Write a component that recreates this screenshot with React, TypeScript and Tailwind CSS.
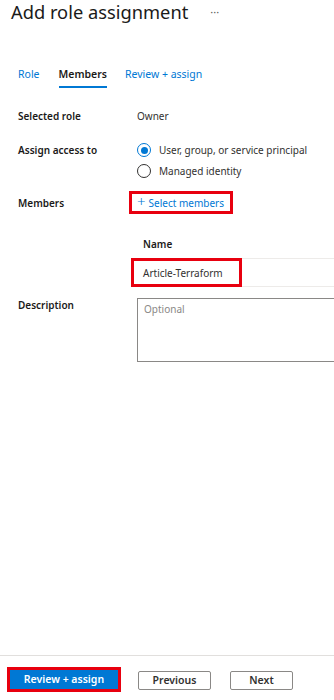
import React from "react";

const font = { fontFamily: '"Noto Sans", "Open Sans", sans-serif' };

export default function App() {
  return (
    <div
      className="w-[334px] h-[700px] bg-white flex flex-col overflow-hidden text-[#323130]"
      style={font}
    >
      <div className="flex-1 overflow-hidden">
        {/* Title */}
        <div className="flex items-center h-[24px] pl-[11px]">
          <h1 className="text-[18.3px] leading-[24px] text-[#1b1a19] whitespace-nowrap">
            Add role assignment
          </h1>
          <span className="ml-[22px] text-[11px] text-[#605e5c] leading-none -mt-[2px]">
            ···
          </span>
        </div>

        {/* Tabs */}
        <div className="mt-[38px] flex pl-[18px] text-[10.5px] leading-[20px]">
          <div className="mr-[19px] pt-[2px] pb-[2px] border-b-2 border-transparent text-[#0078d4]">
            Role
          </div>
          <div className="mr-[18px] pt-[2px] pb-[2px] border-b-2 border-[#0078d4] text-[#1b1a19] font-semibold">
            Members
          </div>
          <div className="pt-[2px] pb-[2px] border-b-2 border-transparent text-[#0078d4]">
            Review + assign
          </div>
        </div>

        {/* Form */}
        <div className="pl-[18px] text-[10px] leading-[20px]">
          <div className="mt-[18px] flex">
            <div className="w-[119px] shrink-0 font-semibold text-[#1b1a19]">Selected role</div>
            <div className="text-[#323130]">Owner</div>
          </div>

          <div className="mt-[14px] flex">
            <div className="w-[119px] shrink-0 font-semibold text-[#1b1a19]">Assign access to</div>
            <div className="flex flex-col gap-[1px]">
              <div className="flex items-center gap-[8px] whitespace-nowrap">
                <span className="w-[14px] h-[14px] rounded-full border border-[#0078d4] flex items-center justify-center">
                  <span className="w-[7px] h-[7px] rounded-full bg-[#0078d4]" />
                </span>
                <span>User, group, or service principal</span>
              </div>
              <div className="flex items-center gap-[8px] whitespace-nowrap">
                <span className="w-[14px] h-[14px] rounded-full border border-[#323130]" />
                <span>Managed identity</span>
              </div>
            </div>
          </div>

          <div className="mt-[10px] flex items-center">
            <div className="w-[111px] shrink-0 font-semibold text-[#1b1a19]">Members</div>
            <div className="h-[23px] w-[104px] border-[3px] border-[#e8000f] flex items-center pl-[5px] text-[#0078d4] whitespace-nowrap">
              <span className="text-[15px] leading-none mr-[3px] -mt-[2px] font-light">+</span>
              <span>Select members</span>
            </div>
          </div>

          <div className="mt-[20px] ml-[125px] font-semibold text-[#1b1a19]">Name</div>

          <div className="mt-[4px] ml-[113px] flex h-[29px] border-t border-b border-[#edebe9]">
            <div className="-mt-px -mb-px w-[111px] border-[3px] border-[#e8000f] flex items-center pl-[9px] text-[#323130] whitespace-nowrap">
              Article-Terraform
            </div>
            <div className="flex-1" />
          </div>

          <div className="mt-[11px] flex items-start">
            <div className="w-[119px] shrink-0 font-semibold text-[#1b1a19] leading-[14px]">Description</div>
            <div className="w-[210px] shrink-0 h-[64px] border border-[#8a8886] px-[6px] text-[#8a8886]">
              Optional
            </div>
          </div>
        </div>
      </div>

      {/* Footer */}
      <div className="h-[45px] border-t border-[#e1dfdd] flex items-start pt-[11px] text-[10.5px]">
        <div className="ml-[7px] w-[114px] h-[25px] border-[3px] border-[#e8000f] bg-[#0078d4] flex items-center justify-center text-white font-semibold">
          Review + assign
        </div>
        <div className="ml-[17px] mt-[4px] w-[73px] h-[19px] border border-[#8a8886] rounded-[2px] flex items-center justify-center text-[#323130] font-semibold">
          Previous
        </div>
        <div className="ml-[19px] mt-[4px] w-[63px] h-[19px] border border-[#8a8886] rounded-[2px] flex items-center justify-center text-[#323130] font-semibold">
          Next
        </div>
      </div>
    </div>
  );
}
